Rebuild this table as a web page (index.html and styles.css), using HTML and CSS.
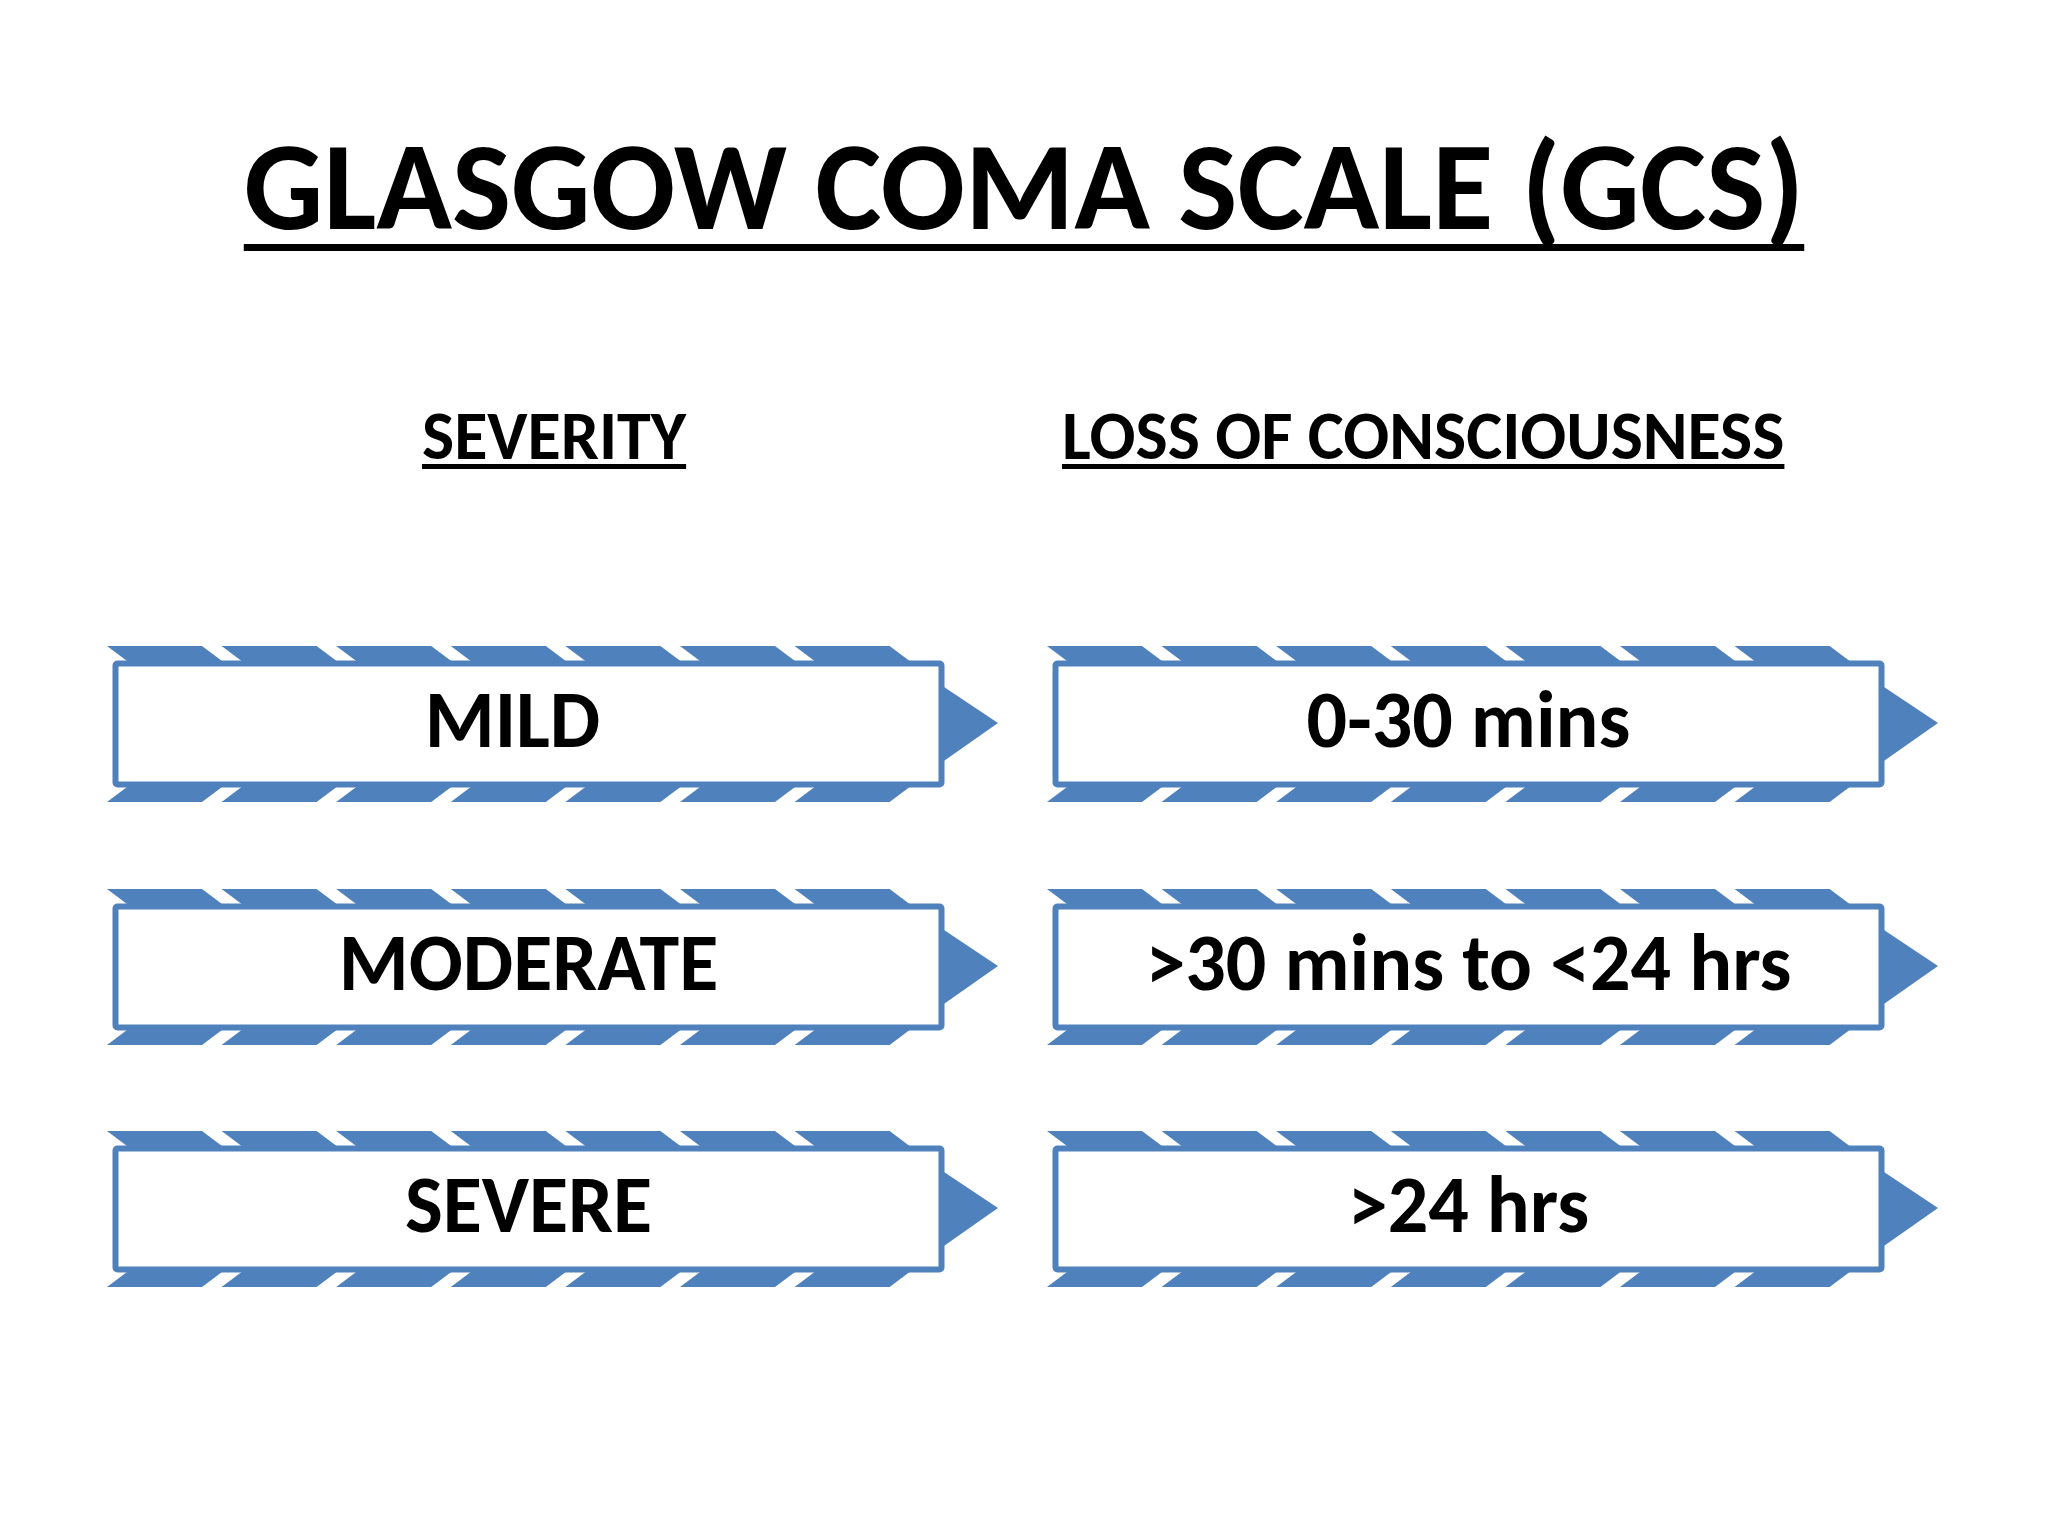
FILE: index.html
```html
<!DOCTYPE html>
<html lang="en">
<head>
<meta charset="utf-8">
<title>Glasgow Coma Scale (GCS)</title>
<link rel="stylesheet" href="styles.css">
</head>
<body>
<main class="slide">
  <h1 class="title"><span class="title-text">GLASGOW COMA SCALE (GCS)</span></h1>

  <div class="headers">
    <h2 class="col-head">SEVERITY</h2>
    <h2 class="col-head">LOSS OF CONSCIOUSNESS</h2>
  </div>

  <div class="rows">
    <div class="arrow">
      <svg class="arrow-shape" viewBox="0 0 892 156" aria-hidden="true"><use href="#arrowShape"/></svg>
      <div class="label label-mild">MILD</div>
    </div>
    <div class="arrow">
      <svg class="arrow-shape" viewBox="0 0 892 156" aria-hidden="true"><use href="#arrowShape"/></svg>
      <div class="label">0-30 mins</div>
    </div>
    <div class="arrow">
      <svg class="arrow-shape" viewBox="0 0 892 156" aria-hidden="true"><use href="#arrowShape"/></svg>
      <div class="label">MODERATE</div>
    </div>
    <div class="arrow">
      <svg class="arrow-shape" viewBox="0 0 892 156" aria-hidden="true"><use href="#arrowShape"/></svg>
      <div class="label">&gt;30 mins to &lt;24 hrs</div>
    </div>
    <div class="arrow">
      <svg class="arrow-shape" viewBox="0 0 892 156" aria-hidden="true"><use href="#arrowShape"/></svg>
      <div class="label">SEVERE</div>
    </div>
    <div class="arrow">
      <svg class="arrow-shape" viewBox="0 0 892 156" aria-hidden="true"><use href="#arrowShape"/></svg>
      <div class="label">&gt;24 hrs</div>
    </div>
  </div>
</main>

<svg class="defs" width="0" height="0" aria-hidden="true">
  <defs>
    <g id="arrowShape" fill="#4F81BD">
      <!-- top stripes -->
      <polygon points="0,0 95,0 115,15 20,15"/>
      <polygon points="114.6,0 209.6,0 229.6,15 134.6,15"/>
      <polygon points="229.2,0 324.2,0 344.2,15 249.2,15"/>
      <polygon points="343.8,0 438.8,0 458.8,15 363.8,15"/>
      <polygon points="458.4,0 553.4,0 573.4,15 478.4,15"/>
      <polygon points="573,0 668,0 688,15 593,15"/>
      <polygon points="687.6,0 782.6,0 802.6,15 707.6,15"/>
      <!-- bottom stripes -->
      <polygon points="20,141 115,141 95,156 0,156"/>
      <polygon points="134.6,141 229.6,141 209.6,156 114.6,156"/>
      <polygon points="249.2,141 344.2,141 324.2,156 229.2,156"/>
      <polygon points="363.8,141 458.8,141 438.8,156 343.8,156"/>
      <polygon points="478.4,141 573.4,141 553.4,156 458.4,156"/>
      <polygon points="593,141 688,141 668,156 573,156"/>
      <polygon points="707.6,141 802.6,141 782.6,156 687.6,156"/>
      <!-- head -->
      <polygon points="834,39 891,77 834,117"/>
      <!-- box -->
      <rect x="8.5" y="17.5" width="826" height="121" rx="2" fill="#FFFFFF" stroke="#4F81BD" stroke-width="6"/>
    </g>
  </defs>
</svg>
</body>
</html>
```

FILE: styles.css
```css
html, body {
  margin: 0;
  padding: 0;
  background: #FFFFFF;
}

body {
  width: 2048px;
  height: 1536px;
  overflow: hidden;
  font-family: Carlito, "Lato", "Open Sans", sans-serif;
  color: #000000;
}

.slide {
  display: flex;
  flex-direction: column;
  padding-top: 111px;
}

.title {
  margin: 0;
  text-align: center;
  font-size: 125px;
  font-weight: 700;
  line-height: 151px;
}

.title-text {
  text-decoration: underline;
  text-decoration-thickness: 7px;
  text-underline-offset: 15px;
  text-decoration-skip-ink: none;
}

.headers {
  display: grid;
  grid-template-columns: 640px auto;
  padding-left: 422px;
  margin-top: 130px;
}

.col-head {
  margin: 0;
  font-size: 68px;
  font-weight: 700;
  line-height: 87px;
  text-decoration: underline;
  text-decoration-thickness: 5px;
  text-underline-offset: 5px;
  text-decoration-skip-ink: none;
  justify-self: start;
}

.rows {
  display: grid;
  grid-template-columns: 892px 892px;
  column-gap: 48px;
  row-gap: 86.5px;
  padding-left: 107px;
  margin-top: 167px;
}

.arrow {
  position: relative;
  width: 892px;
  height: 156px;
  display: flex;
  align-items: center;
}

.arrow-shape {
  position: absolute;
  left: 0;
  top: 0;
  width: 892px;
  height: 156px;
}

.label {
  position: relative;
  margin-left: 6px;
  margin-bottom: 8px;
  width: 831px;
  text-align: center;
  font-size: 80px;
  font-weight: 700;
  line-height: 1;
}

.label-mild {
  padding-right: 32px;
  box-sizing: border-box;
}

.defs {
  position: absolute;
  width: 0;
  height: 0;
  overflow: hidden;
}
```
